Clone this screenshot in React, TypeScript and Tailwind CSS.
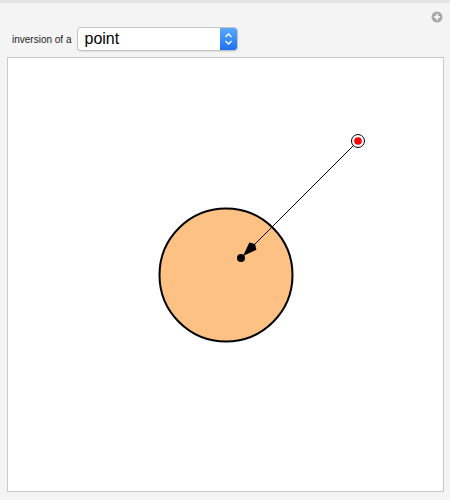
import React from "react";

export default function App() {
    // tip of the arrow sits just outside the dot
    const from = { x: 350, y: 83 };
    const tip = { x: 235, y: 198 };
    const ux = -Math.SQRT1_2;
    const uy = Math.SQRT1_2;
    const len = 14;
    const half = 5;
    const bx = tip.x - ux * len;
    const by = tip.y - uy * len;
    const head = `${tip.x},${tip.y} ${bx - uy * half},${by + ux * half} ${bx + ux * -3},${by + uy * -3} ${bx + uy * half},${by - ux * half}`;

    return (
        <div className="w-[450px] h-[500px] bg-[#f4f4f4] flex flex-col" style={{ fontFamily: '"Liberation Sans", Arial, sans-serif' }}>
            {/* top strip */}
            <div className="h-[3px] bg-[#e4e4e4]" />

            {/* plus button */}
            <div className="flex justify-end pr-[7px] pt-[8px] h-[24px]">
                <svg width="12" height="12" viewBox="0 0 12 12">
                    <circle cx="6" cy="6" r="5.5" fill="#a9a9a9" />
                    <path d="M6 3v6M3 6h6" stroke="#fff" strokeWidth="1.6" />
                </svg>
            </div>

            {/* controls */}
            <div className="flex items-center h-[24px] pl-[12px]">
                <span className="text-[10px] text-[#222] mr-[6px]">inversion of a</span>
                <div className="flex w-[161px] h-[24px] rounded-[4px] border border-[#c4c4c4] bg-white overflow-hidden shadow-[0_1px_1px_rgba(0,0,0,0.08)]">
                    <span className="flex-1 pl-[6px] text-[16px] leading-[22px] text-black">point</span>
                    <div className="w-[17px] bg-gradient-to-b from-[#5aa9fb] to-[#1e6ff0] flex items-center justify-center">
                        <svg width="9" height="14" viewBox="0 0 9 14">
                            <path d="M1.5 5L4.5 2L7.5 5M1.5 9L4.5 12L7.5 9" fill="none" stroke="#fff" strokeWidth="1.3" />
                        </svg>
                    </div>
                </div>
            </div>

            {/* graphics panel */}
            <div className="mt-[6px] ml-[7px] w-[437px] h-[435px] bg-white border border-[#c8c8c8]">
                <svg width="435" height="433" viewBox="0 0 435 433">
                    <circle cx="218" cy="217" r="66.5" fill="#fec184" stroke="#000" strokeWidth="2" />
                    <line x1={from.x} y1={from.y} x2={bx} y2={by} stroke="#000" strokeWidth="1" />
                    <polygon points={head} fill="#000" />
                    <circle cx="233" cy="200" r="4" fill="#000" />
                    <circle cx={from.x} cy={from.y} r="6.5" fill="#fff" stroke="#000" strokeWidth="1" />
                    <circle cx={from.x} cy={from.y} r="3.8" fill="#f00" />
                </svg>
            </div>
        </div>
    );
}
